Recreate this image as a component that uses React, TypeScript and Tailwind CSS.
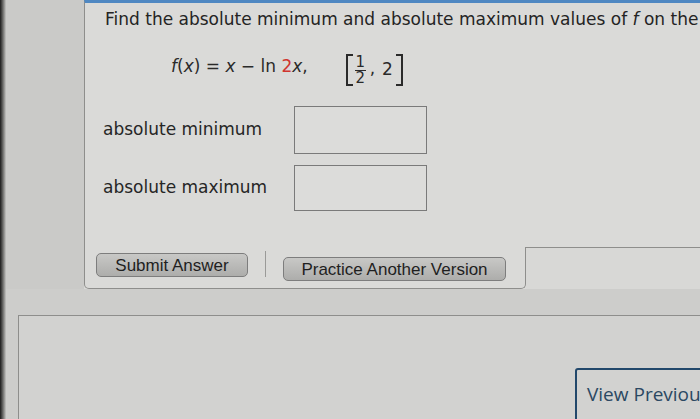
import React from 'react';

const sans = "font-['DejaVu_Sans','Verdana',sans-serif]";
const arial = "font-['Liberation_Sans','Arial',sans-serif]";

function AnswerRow({ label, height }: { label: string; height: string }) {
  return (
    <div className={`flex items-center ${height}`}>
      <span className={`w-[191px] text-[17px] text-[#262626] ${sans}`}>{label}</span>
      <div className="w-[133px] self-stretch border border-[#7a7a7a] bg-[#dcdcda]" />
    </div>
  );
}

function Button({ children, className = '' }: { children: React.ReactNode; className?: string }) {
  return (
    <button
      className={`h-[24px] rounded-[5px] border border-[#7d7d7d] bg-linear-to-b from-[#c8c8c6] to-[#adadab] text-[17px] leading-none text-[#1f1f1f] ${arial} ${className}`}
    >
      {children}
    </button>
  );
}

export default function App() {
  return (
    <div className="w-[700px] h-[419px] overflow-hidden flex bg-[#cdcdcb]">
      {/* screen edge */}
      <div className="w-[6px] shrink-0 bg-linear-to-r from-[#1c1c1c] via-[#6e6e6c] to-[#c6c6c4]" />

      <div className="flex-1 flex flex-col">
        <div className="flex">
          <div className="w-[78px] shrink-0 bg-[#cacac8]" />

          {/* question card */}
          <div className="flex-1 flex flex-col bg-[#dadad8]">
            <div className={`h-[247px] border-l border-[#8e8e8c] border-t-[3px] border-t-[#4f88c2] pl-[20px] pt-[6px] ${sans}`}>
              <p className="text-[17px] leading-[20px] text-[#242424] whitespace-nowrap">
                Find the absolute minimum and absolute maximum values of <i>f</i> on the
              </p>

              <div className="flex items-center mt-[25px] ml-[66px] h-[32px] text-[17px] text-[#2a2a2a]">
                <span className="whitespace-pre mb-[7px]">
                  <i>f</i>(<i>x</i>) = <i>x</i> − ln <span className="text-[#d0352f]">2</span><i>x</i>,
                </span>
                <span className="ml-[38px] flex items-center h-[32px]">
                  <span className="w-[7px] h-[32px] border-l-2 border-t-2 border-b-2 border-[#2a2a2a]" />
                  <span className="flex flex-col items-center ml-[2px] text-[15px] leading-[15px]">
                    <span>1</span>
                    <span className="w-[11px] border-t border-[#2a2a2a]" />
                    <span>2</span>
                  </span>
                  <span className="ml-[4px] self-end mb-[9px] leading-none">,</span>
                  <span className="ml-[7px]">2</span>
                  <span className="ml-[3px] w-[7px] h-[32px] border-r-2 border-t-2 border-b-2 border-[#2a2a2a]" />
                </span>
              </div>

              <div className="flex flex-col gap-[11px] mt-[20px] ml-[-2px]">
                <AnswerRow label="absolute minimum" height="h-[48px]" />
                <AnswerRow label="absolute maximum" height="h-[46px]" />
              </div>
            </div>

            {/* button row + side panel edge */}
            <div className="flex h-[42px]">
              <div className="w-[442px] shrink-0 flex items-start pt-[6px] pl-[11px] border-l border-r border-b border-[#8e8e8c] rounded-b-[5px]">
                <Button className="w-[152px]">Submit Answer</Button>
                <div className="w-px h-[26px] bg-[#9a9a98] ml-[17px] mt-[-2px]" />
                <Button className="w-[223px] ml-[17px] mt-[4px]">Practice Another Version</Button>
              </div>
              <div className="flex-1 border-t border-[#8e8e8c] bg-[#d8d8d6]" />
            </div>
          </div>
        </div>

        {/* lower panel */}
        <div className="flex-1 mt-[26px] ml-[12px] border-l border-t border-[#8e8e8c] bg-[#d2d2d0] pl-[556px] pt-[52px]">
          <div className="w-[200px] h-[80px] border-2 border-[#22486b] rounded-tl-[3px] pl-[10px] pt-[10px]">
            <span className="text-[19px] text-[#2b4862] whitespace-nowrap font-['Open_Sans','Noto_Sans',sans-serif]">
              View Previous
            </span>
          </div>
        </div>
      </div>
    </div>
  );
}
